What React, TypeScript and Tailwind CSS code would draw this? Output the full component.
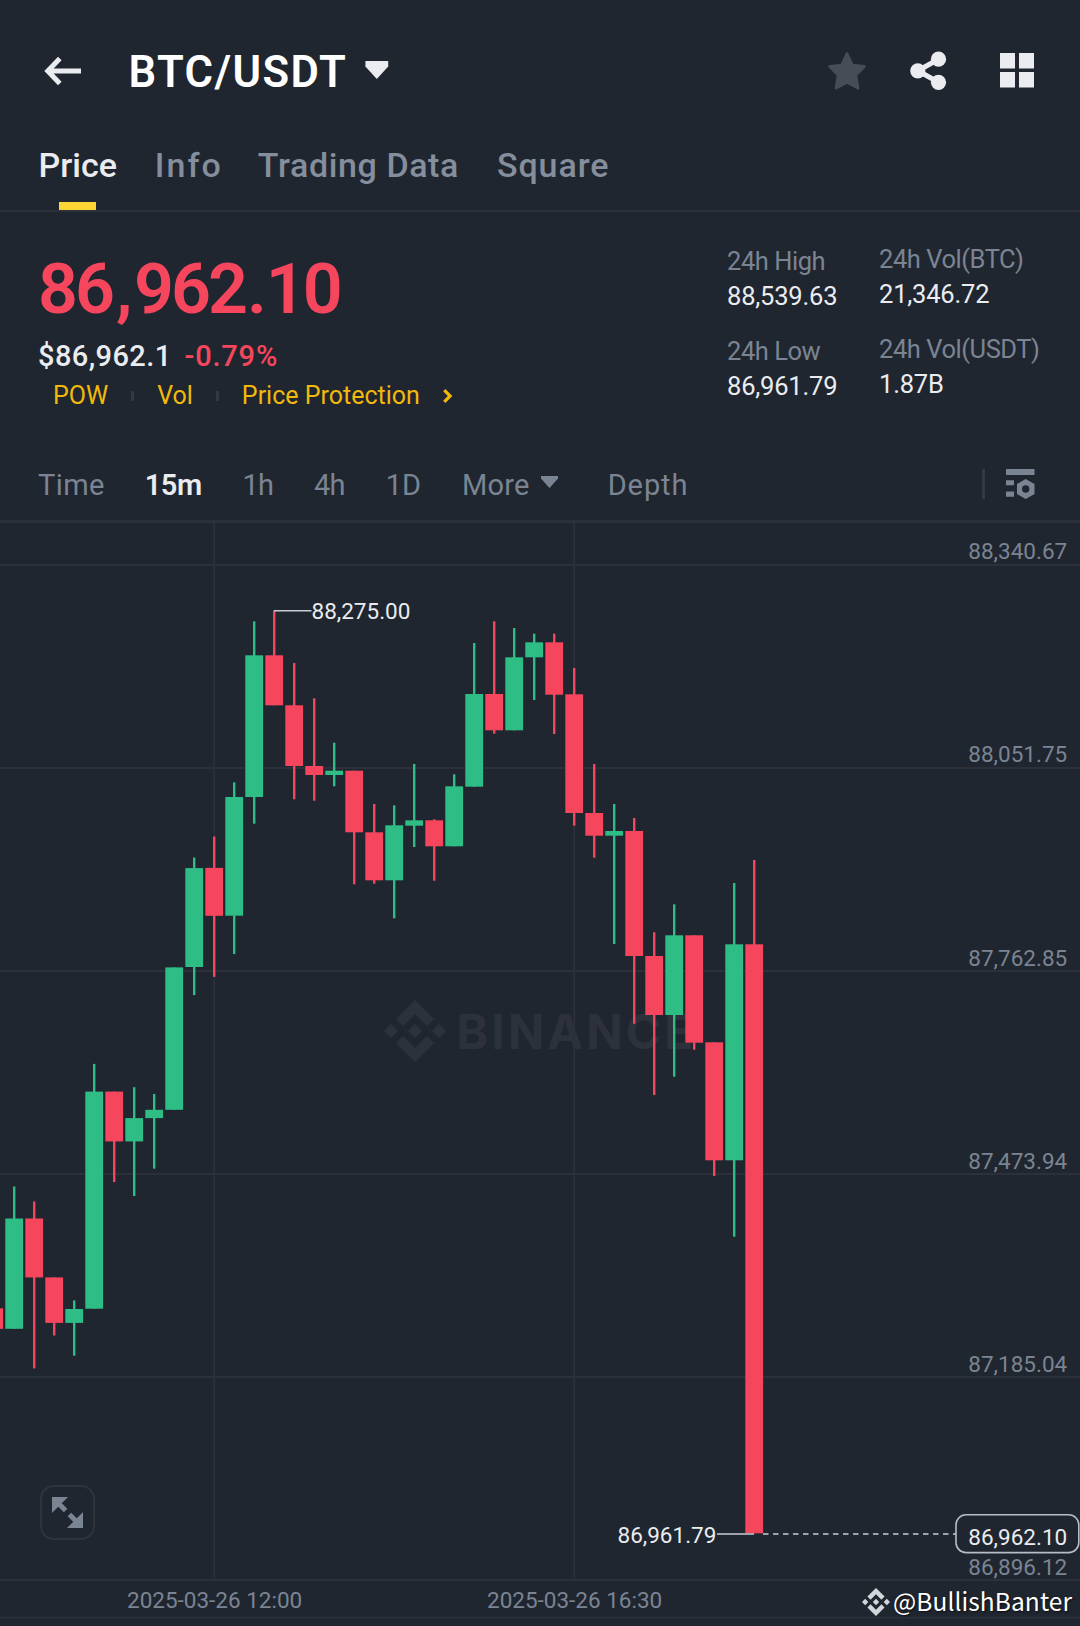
import React from "react";
import { SiBinance } from "react-icons/si";

type Candle = { up: boolean; high: number; top: number; bottom: number; low: number };

const c = (up: 0 | 1, high: number, top: number, bottom: number, low: number): Candle => ({
  up: up === 1,
  high,
  top,
  bottom,
  low,
});

// Vertical positions of every 15 minute candle, one per 20px slot, starting one slot off the left edge.
const candles: Candle[] = [
  c(0, 1308.3, 1308.3, 1328.8, 1328.8),
  c(1, 1186.5, 1218.5, 1328.8, 1328.8),
  c(0, 1201.5, 1218.5, 1277.4, 1368.4),
  c(0, 1277.4, 1277.4, 1322.9, 1335.5),
  c(1, 1300.4, 1309, 1322.9, 1355.7),
  c(1, 1063.9, 1091.6, 1308.7, 1308.7),
  c(0, 1091.6, 1091.6, 1141.4, 1182.1),
  c(1, 1087.2, 1118.1, 1141.4, 1196),
  c(1, 1094, 1109.8, 1118.1, 1168.7),
  c(1, 967.4, 967.4, 1109.8, 1109.8),
  c(1, 857.5, 868.1, 967, 995.1),
  c(0, 836.5, 867.9, 915.8, 976.9),
  c(1, 782.3, 797, 915.7, 954),
  c(1, 621.3, 655.3, 797, 823.7),
  c(0, 610.5, 655.3, 705.3, 705.3),
  c(0, 663, 705.3, 766, 799.3),
  c(0, 698.3, 766, 775, 800.7),
  c(1, 742.7, 770.7, 775, 786.3),
  c(0, 770.7, 770.7, 832.3, 884.3),
  c(0, 804, 832.3, 880.3, 883.7),
  c(1, 805.3, 825.3, 880.3, 918.3),
  c(1, 764, 820.3, 825.7, 847),
  c(0, 819.3, 820.3, 846.3, 880.7),
  c(1, 774.3, 786.3, 846.3, 846.3),
  c(1, 643, 694, 786.7, 786.7),
  c(0, 621.3, 694, 730.3, 733.7),
  c(1, 628, 657.3, 730.3, 730.3),
  c(1, 633.7, 642.3, 657.3, 700),
  c(0, 633.7, 642.3, 694.7, 734),
  c(0, 668, 694.3, 813, 825.7),
  c(0, 764, 813, 835.7, 857.7),
  c(1, 804, 831, 835.7, 944),
  c(0, 818, 831, 956, 1023.7),
  c(0, 932.3, 956, 1015, 1095),
  c(1, 904.3, 935.3, 1015, 1076.7),
  c(0, 935.3, 935.3, 1042.7, 1049.7),
  c(0, 1042.3, 1042.3, 1160.3, 1176),
  c(1, 883, 944.3, 1160.3, 1236.7),
  c(0, 860, 944.3, 1533.3, 1533.3),
];

const priceLines = [565, 768, 971, 1174, 1377];

const priceLabels: [string, number][] = [
  ["88,340.67", 559.2],
  ["88,051.75", 762.3],
  ["87,762.85", 966],
  ["87,473.94", 1169],
  ["87,185.04", 1372],
  ["86,896.12", 1575.2],
];

const Header = () => (
  <header className="flex h-[120px] items-center pt-6 pr-[46px] pl-[44px]">
    <svg width="38" height="30" viewBox="0 0 38 30" className="-mt-[3px]" fill="none" stroke="#EAECEF" strokeWidth="5">
      <path d="M15.8 2.6 3.8 15l12 12.4M4 15h33" />
    </svg>
    <h1 className="mt-[2px] ml-[46.5px] text-[43.6px] leading-none font-semibold tracking-[1.4px] text-white">
      BTC/USDT
    </h1>
    <svg width="24" height="18" viewBox="0 0 24 18" className="-mt-[4px] ml-[17.5px]" fill="#EAECEF">
      <path d="M.4 0h22.8v5.6L11.8 18 .4 5.6z" />
    </svg>
    <div className="ml-auto flex items-center">
      <svg width="40" height="40" viewBox="0 0 40 40" fill="#474D57" stroke="#474D57" strokeWidth="3" strokeLinejoin="round">
        <path d="M20 1.8 25.2 13.2 37.3 14.4 28.7 23.2 30.9 36 20 30.2 9.1 36 11.3 23.2 2.7 14.4 14.8 13.2z" />
      </svg>
      <svg width="37" height="40" viewBox="0 0 37 40" className="-mt-[3px] ml-[43px]" fill="#EAECEF" stroke="#EAECEF">
        <path d="M28.5 8.2 7.8 19.8l20.7 11.5" fill="none" strokeWidth="5" />
        <g stroke="none">
          <circle cx="7.8" cy="19.8" r="7.6" />
          <circle cx="28.5" cy="8.2" r="7.6" />
          <circle cx="28.5" cy="31.3" r="7.6" />
        </g>
      </svg>
      <svg width="34" height="35" viewBox="0 0 34 35" className="-mt-[3px] ml-[53px]" fill="#EAECEF">
        <path d="M0 0h15v15.5H0zM19 0h15v15.5H19zM0 19h15v15.5H0zM19 19h15v15.5H19z" />
      </svg>
    </div>
  </header>
);

const Tabs = () => (
  <nav className="flex h-[92px] gap-[38px] border-b-2 border-[#2B303B] pl-[38.5px] text-[34px] leading-[90px] font-medium text-[#848E9C]">
    <span className="relative text-[#EAECEF]">
      Price
      <span className="absolute bottom-0 left-[20.5px] h-2 w-[37px] bg-[#FCD535]" />
    </span>
    <span className="w-[65px] tracking-[2px]">Info</span>
    <span className="tracking-[0.6px]">Trading Data</span>
    <span className="tracking-[0.9px]">Square</span>
  </nav>
);

const Stat = ({ label, value }: { label: string; value: string }) => (
  <div className="flex flex-col text-[25.5px] leading-[34.5px]">
    <span className="tracking-[-0.45px] whitespace-nowrap text-[#7B8492]">{label}</span>
    <span className="font-[450] tracking-[-0.2px] text-[#EAECEF]">{value}</span>
  </div>
);

const Summary = () => (
  <section className="flex h-[238px] pl-[38px]">
    <div className="w-[689px] pt-[42px]">
      <div className="text-[70px] leading-[70px] font-semibold tracking-[-3px] text-[#F6465D]">
        86<span className="mr-[4.5px] ml-[4px]">,</span>962<span className="mr-[2px] ml-[2px]">.</span>10
      </div>
      <div className="mt-3.5 flex gap-[13px] text-[29px] leading-[36px] font-medium">
        <span className="tracking-[0.4px] text-[#EAECEF]">$86,962.1</span>
        <span className="tracking-[0.8px] text-[#F6465D]">-0.79%</span>
      </div>
      <div className="mt-[6px] flex items-center gap-[23px] pl-[15px] text-[25px] leading-[32px] text-[#F0B90B]">
        <span>POW</span>
        <span className="h-2.5 w-[3px] bg-[#333944]" />
        <span>Vol</span>
        <span className="h-2.5 w-[3px] bg-[#333944]" />
        <span>Price Protection</span>
        <svg width="10" height="14" viewBox="0 0 10 14" fill="none" stroke="#F0B90B" strokeWidth="3.2">
          <path d="m1.3 1.2 5.8 5.8-5.8 5.8" />
        </svg>
      </div>
    </div>
    <div className="flex w-[152px] flex-col gap-[21px] pt-[32px]">
      <Stat label="24h High" value="88,539.63" />
      <Stat label="24h Low" value="86,961.79" />
    </div>
    <div className="flex flex-col gap-[21px] pt-[30px]">
      <Stat label="24h Vol(BTC)" value="21,346.72" />
      <Stat label="24h Vol(USDT)" value="1.87B" />
    </div>
  </section>
);

const Intervals = () => (
  <nav className="flex h-[73px] items-center gap-[41px] border-b-[3px] border-[#2B303B] pt-0.5 pr-[45px] pl-[38px] text-[29px] text-[#7B8492]">
    <span className="tracking-[0.4px]">Time</span>
    <span className="-ml-px font-semibold tracking-[-0.5px] text-[#EAECEF]">15m</span>
    <span className="tracking-[-1px]">1h</span>
    <span className="tracking-[-0.7px]">4h</span>
    <span>1D</span>
    <span className="flex items-center gap-[11px] tracking-[0.2px]">
      More
      <svg width="17" height="12" viewBox="0 0 17 12" className="-mt-2" fill="#7B8492">
        <path d="M0 0h17v2.5L8.5 12 0 2.5z" />
      </svg>
    </span>
    <span className="ml-[9px] tracking-[0.9px]">Depth</span>
    <div className="-mt-[5px] ml-auto flex items-center gap-[21px]">
      <span className="h-[30px] w-[3px] bg-[#333944]" />
      <svg width="29" height="30" viewBox="0 0 29 30" fill="#7B8492">
        <path d="M0 0h28.5v6H0zM0 11.3h8v5H0zM0 22.5h8v5.3H0z" />
        <path
          fillRule="evenodd"
          d="M19.7 10 28.5 15v10l-8.8 5-8.7-5V15zM19.7 16.3a3.7 3.7 0 1 0 0 7.4 3.7 3.7 0 0 0 0-7.4z"
        />
      </svg>
    </div>
  </nav>
);

const Chart = () => (
  <section className="relative">
    <svg width="1080" height="1103" viewBox="0 523 1080 1103" className="block font-[Roboto,sans-serif] text-[22.5px]">
      <g fill="#2C313C">
        <SiBinance x={384} y={1000} size={62} color="#2C313C" />
        <text x="456.5" y="1048.5" className="font-[Inter,sans-serif] text-[48px] font-bold tracking-[3px]">
          BINANCE
        </text>
      </g>
      <g stroke="#2B303B" strokeWidth="1.8">
        {priceLines.map((y) => (
          <line key={y} x1="0" x2="1080" y1={y} y2={y} />
        ))}
        <line x1="214.2" x2="214.2" y1="523" y2="1580" />
        <line x1="574.2" x2="574.2" y1="523" y2="1580" />
        <line x1="0" x2="1080" y1="1580" y2="1580" />
        <line x1="0" x2="1080" y1="1617.7" y2="1617.7" />
      </g>
      {candles.map((k, i) => {
        const x = 14.2 + (i - 1) * 20;
        return (
          <g key={i} fill={k.up ? "#2EBD85" : "#F6465D"}>
            <rect x={x - 1.2} y={k.high} width="2.4" height={k.low - k.high} />
            <rect x={x - 8.9} y={k.top} width="17.8" height={k.bottom - k.top} />
          </g>
        );
      })}
      <g stroke="#C9CDD3" strokeWidth="1.5">
        <line x1="274" x2="311.5" y1="610.7" y2="610.7" />
        <line x1="717" x2="754" y1="1534" y2="1534" />
        <line x1="763" x2="956" y1="1534" y2="1534" strokeDasharray="5.5 4.5" />
      </g>
      <rect x="956" y="1514.8" width="122.8" height="37.8" rx="10" fill="#202630" stroke="#B7BDC6" strokeWidth="1.6" />
      <g fill="#EAECEF">
        <text x="311.5" y="619">88,275.00</text>
        <text x="617.5" y="1543.2">86,961.79</text>
        <text x="968.3" y="1545">86,962.10</text>
      </g>
      <g fill="#7B8492">
        {priceLabels.map(([label, y]) => (
          <text key={label} x="968.3" y={y}>
            {label}
          </text>
        ))}
        <text x="127" y="1608.3">2025-03-26 12:00</text>
        <text x="487" y="1608.3">2025-03-26 16:30</text>
      </g>
      <SiBinance x={862} y={1588} size={28} color="#D3D6DA" />
      <text
        x="893"
        y="1611"
        fill="#FFFFFF"
        textLength="179"
        className="font-['Noto_Sans_CJK_SC',sans-serif] text-[24.5px] font-normal [text-shadow:1px_1px_2px_rgba(0,0,0,0.7)]"
      >
        @BullishBanter
      </text>
    </svg>
    <button className="absolute top-[962px] left-[40px] flex size-[55px] items-center justify-center rounded-[14px] border-[2.5px] border-[#2E333E]">
      <svg width="31" height="31" viewBox="0 0 31 31" fill="#7B8492" stroke="#7B8492">
        <path d="M0 0h16L0 16zM31 31H15l16-16z" stroke="none" />
        <path d="m5 5 8.6 8.6M26 26l-8.6-8.6" strokeWidth="5" />
      </svg>
    </button>
  </section>
);

export default function App() {
  return (
    <main className="h-[1626px] w-[1080px] overflow-hidden bg-[#202630] font-[Roboto,sans-serif]">
      <Header />
      <Tabs />
      <Summary />
      <Intervals />
      <Chart />
    </main>
  );
}
